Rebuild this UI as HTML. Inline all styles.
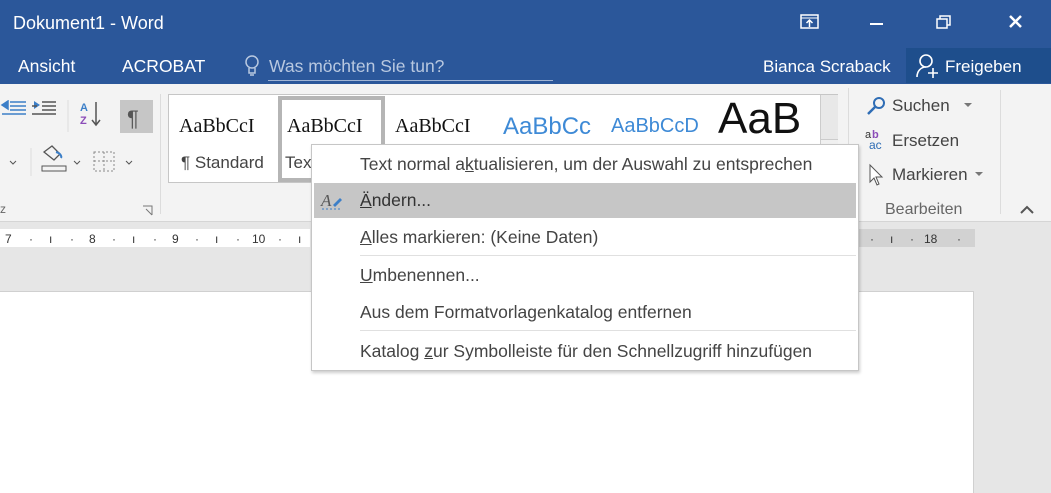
<!DOCTYPE html>
<html><head><meta charset="utf-8"><style>
*{margin:0;padding:0;box-sizing:border-box}
body{width:1051px;height:493px;overflow:hidden;position:relative;background:#e6e6e6;font-family:"Liberation Sans","DejaVu Sans",sans-serif}
.a{position:absolute;white-space:nowrap}
.w{color:#fff}
.g{color:#444}
.mi{position:absolute;left:48px;font-size:17.5px;color:#444;white-space:nowrap}
.r{position:absolute;top:232px;font-size:12px;color:#333}
u{text-decoration:underline}
</style></head><body>
<div class="a" style="left:0;top:0;width:1051px;height:84px;background:#2b579a"></div>
<div class="a w" style="left:13px;top:13px;font-size:18px">Dokument1 - Word</div>
<svg class="a" style="left:795px;top:12px" width="230" height="22">
<rect x="6" y="3" width="17" height="13" fill="none" stroke="#fff" stroke-width="1.5"/><line x1="6" y1="6" x2="23" y2="6" stroke="#fff"/><path d="M14.5 15V8M11.5 11l3-3 3 3" stroke="#fff" fill="none" stroke-width="1.5"/>
<line x1="75" y1="12" x2="88" y2="12" stroke="#fff" stroke-width="2"/>
<rect x="142" y="7" width="10" height="9" fill="none" stroke="#fff" stroke-width="1.5"/><path d="M145 7V4h10v9h-3" fill="none" stroke="#fff" stroke-width="1.5"/>
<path d="M215 4l11 11M226 4l-11 11" stroke="#fff" stroke-width="2.5"/>
</svg>
<div class="a w" style="left:18px;top:56px;font-size:17.5px">Ansicht</div>
<div class="a w" style="left:122px;top:56px;font-size:17.5px">ACROBAT</div>
<svg class="a" style="left:244px;top:55px" width="16" height="24"><circle cx="8" cy="7" r="6" fill="none" stroke="#b8c8e0" stroke-width="1.5"/><path d="M5 13v5h6v-5M6 20h4" stroke="#b8c8e0" fill="none" stroke-width="1.5"/></svg>
<div class="a" style="left:269px;top:56px;font-size:17.5px;color:#b8c8e0">Was möchten Sie tun?</div>
<div class="a" style="left:268px;top:80px;width:285px;height:1px;background:#a0b4d4"></div>
<div class="a w" style="left:763px;top:57px;font-size:17px">Bianca Scraback</div>
<div class="a" style="left:906px;top:48px;width:145px;height:35px;background:#1e4e8c"></div>
<svg class="a" style="left:915px;top:52px" width="26" height="28"><circle cx="11" cy="9" r="6" fill="none" stroke="#fff" stroke-width="1.6"/><path d="M2 25c0-6 4-10 9-10" fill="none" stroke="#fff" stroke-width="1.6"/><path d="M18 16v10M13 21h10" stroke="#fff" stroke-width="1.6"/></svg>
<div class="a w" style="left:945px;top:57px;font-size:17px">Freigeben</div>
<div class="a" style="left:0;top:84px;width:1051px;height:138px;background:#f3f3f3;border-bottom:1px solid #d5d5d5"></div>
<svg class="a" style="left:0;top:100px" width="160" height="80">
<path d="M2 5l6-4v8zM10 2h16M10 6h16M10 10h16M2 14h24" stroke="#3c7fc8" fill="#3c7fc8" stroke-width="1.5"/>
<path d="M40 5l-6-4v8z" fill="#3c7fc8"/><path d="M32 6h5M42 2h14M42 6h14M42 10h14M32 14h24" stroke="#555" stroke-width="1.5"/>
<line x1="68" y1="0" x2="68" y2="32" stroke="#ddd"/>
<text x="80" y="11" font-size="11" fill="#3c7fc8" font-weight="bold">A</text><text x="80" y="24" font-size="11" fill="#8b4cb8" font-weight="bold">Z</text>
<path d="M96 2v22M92 20l4 5 4-5" stroke="#555" fill="none" stroke-width="1.5"/>
<rect x="120" y="0" width="33" height="33" fill="#c6c6c6"/>
<text x="127" y="26" font-size="22" fill="#555">¶</text>
<path d="M10 61l3 3 3-3" stroke="#555" fill="none"/>
<line x1="31" y1="48" x2="31" y2="76" stroke="#ddd"/>
<path d="M44 52l8-6 8 8-6 6z" fill="none" stroke="#555" stroke-width="1.3"/><path d="M56 52c4 1 6 4 5 6" stroke="#3c7fc8" fill="none" stroke-width="2"/><rect x="42" y="66" width="24" height="5" fill="none" stroke="#555"/>
<path d="M74 61l3 3 3-3" stroke="#555" fill="none"/>
<rect x="94" y="52" width="20" height="19" fill="none" stroke="#888" stroke-dasharray="2 2"/><path d="M104 52v19M94 61h20" stroke="#888" stroke-dasharray="2 2"/>
<path d="M126 61l3 3 3-3" stroke="#555" fill="none"/>
</svg>
<div class="a" style="left:0;top:202px;font-size:12px;color:#666">z</div>
<svg class="a" style="left:142px;top:205px" width="12" height="12"><path d="M1 1h9v9" fill="none" stroke="#777"/><path d="M4 4l6 6" stroke="#777"/></svg>
<div class="a" style="left:160px;top:94px;width:1px;height:120px;background:#dcdcdc"></div>
<div class="a" style="left:168px;top:94px;width:670px;height:89px;background:#fff;border:1px solid #c6c6c6"></div>
<div class="a" style="left:820px;top:95px;width:18px;height:44px;background:#e8e8e8;border-left:1px solid #ccc"></div>
<div class="a" style="left:820px;top:139px;width:18px;height:43px;background:#f0f0f0;border-left:1px solid #ccc;border-top:1px solid #ccc"></div>
<div class="a" style="left:278px;top:96px;width:107px;height:86px;border:4px solid #b5b5b5"></div>
<div class="a" style="left:179px;top:115px;font-family:'Liberation Serif',serif;font-size:20px;color:#111">AaBbCcI</div>
<div class="a" style="left:181px;top:153px;font-size:17px;color:#444">¶ Standard</div>
<div class="a" style="left:287px;top:115px;font-family:'Liberation Serif',serif;font-size:20px;color:#111">AaBbCcI</div>
<div class="a" style="left:285px;top:153px;font-size:17px;color:#444">Tex</div>
<div class="a" style="left:395px;top:115px;font-family:'Liberation Serif',serif;font-size:20px;color:#111">AaBbCcI</div>
<div class="a" style="left:503px;top:113px;font-size:24px;color:#3e8ad6;width:88px;overflow:hidden">AaBbCc</div>
<div class="a" style="left:611px;top:115px;font-size:20px;color:#3e8ad6;width:88px;overflow:hidden">AaBbCcD</div>
<div class="a" style="left:718px;top:94px;font-size:44px;color:#111;width:86px;overflow:hidden">AaB</div>
<div class="a" style="left:848px;top:88px;width:1px;height:126px;background:#dcdcdc"></div>
<svg class="a" style="left:865px;top:95px" width="24" height="100">
<circle cx="14" cy="8" r="5" fill="none" stroke="#2f6db5" stroke-width="2"/><path d="M10 12l-7 7" stroke="#2f6db5" stroke-width="2.5"/>
<text x="0" y="43" font-size="11" fill="#333">a</text><text x="7" y="43" font-size="11" fill="#8b4cb8" font-weight="bold">b</text><text x="4" y="54" font-size="12" fill="#2f6db5">ac</text>
<path d="M5 70v17l4-4 3 7 2-1-3-7h6z" fill="#fff" stroke="#555"/>
</svg>
<div class="a g" style="left:892px;top:96px;font-size:17px">Suchen</div>
<svg class="a" style="left:964px;top:103px" width="10" height="6"><path d="M0 0h8l-4 4z" fill="#777"/></svg>
<div class="a g" style="left:892px;top:131px;font-size:17px">Ersetzen</div>
<div class="a g" style="left:892px;top:165px;font-size:17px">Markieren</div>
<svg class="a" style="left:975px;top:172px" width="10" height="6"><path d="M0 0h8l-4 4z" fill="#777"/></svg>
<div class="a" style="left:885px;top:201px;font-size:16px;color:#666">Bearbeiten</div>
<div class="a" style="left:1000px;top:90px;width:1px;height:124px;background:#dcdcdc"></div>
<svg class="a" style="left:1020px;top:205px" width="14" height="10"><path d="M1 8l6-6 6 6" stroke="#555" fill="none" stroke-width="2"/></svg>
<!-- ruler -->
<div class="a" style="left:0;top:229px;width:310px;height:18px;background:#fff"></div>
<div class="a" style="left:858px;top:229px;width:117px;height:18px;background:#d2d2d2"></div>
<span class="r" style="left:5px">7</span><span class="r" style="left:29px">·</span><span class="r" style="left:49px">ı</span><span class="r" style="left:70px">·</span>
<span class="r" style="left:89px">8</span><span class="r" style="left:112px">·</span><span class="r" style="left:132px">ı</span><span class="r" style="left:153px">·</span>
<span class="r" style="left:172px">9</span><span class="r" style="left:195px">·</span><span class="r" style="left:215px">ı</span><span class="r" style="left:236px">·</span>
<span class="r" style="left:252px">10</span><span class="r" style="left:278px">·</span><span class="r" style="left:298px">ı</span>
<span class="r" style="left:870px">·</span><span class="r" style="left:890px">ı</span><span class="r" style="left:910px">·</span><span class="r" style="left:924px">18</span><span class="r" style="left:957px">·</span>
<div class="a" style="left:0;top:291px;width:974px;height:202px;background:#fff;border-top:1px solid #d0d0d0;border-right:1px solid #d0d0d0"></div>
<div class="a" style="left:311px;top:144px;width:548px;height:227px;background:#fff;border:1px solid #c6c6c6;box-shadow:1px 2px 3px rgba(0,0,0,.2)">
<div class="mi" style="top:9px">Text normal a<u>k</u>tualisieren, um der Auswahl zu entsprechen</div>
<div class="a" style="left:2px;top:38px;width:542px;height:35px;background:#c6c6c6"></div>
<svg class="a" style="left:8px;top:45px" width="24" height="22"><text x="1" y="16" font-size="17" font-style="italic" fill="#555" font-family="Liberation Serif">A</text><path d="M13 15l7-7 2 2-7 7z" fill="#3c7fc8"/><path d="M2 19h20" stroke="#3c7fc8" stroke-dasharray="2 2"/></svg>
<div class="mi" style="top:45px;color:#333"><u>Ä</u>ndern...</div>
<div class="mi" style="top:82px"><u>A</u>lles markieren: (Keine Daten)</div>
<div class="a" style="left:48px;top:110px;width:496px;height:1px;background:#e0e0e0"></div>
<div class="mi" style="top:120px"><u>U</u>mbenennen...</div>
<div class="mi" style="top:157px">Aus dem Formatvorla<u>g</u>enkatalog entfernen</div>
<div class="a" style="left:48px;top:185px;width:496px;height:1px;background:#e0e0e0"></div>
<div class="mi" style="top:196px">Katalog <u>z</u>ur Symbolleiste für den Schnellzugriff hinzufügen</div>
</div>
</body></html>
